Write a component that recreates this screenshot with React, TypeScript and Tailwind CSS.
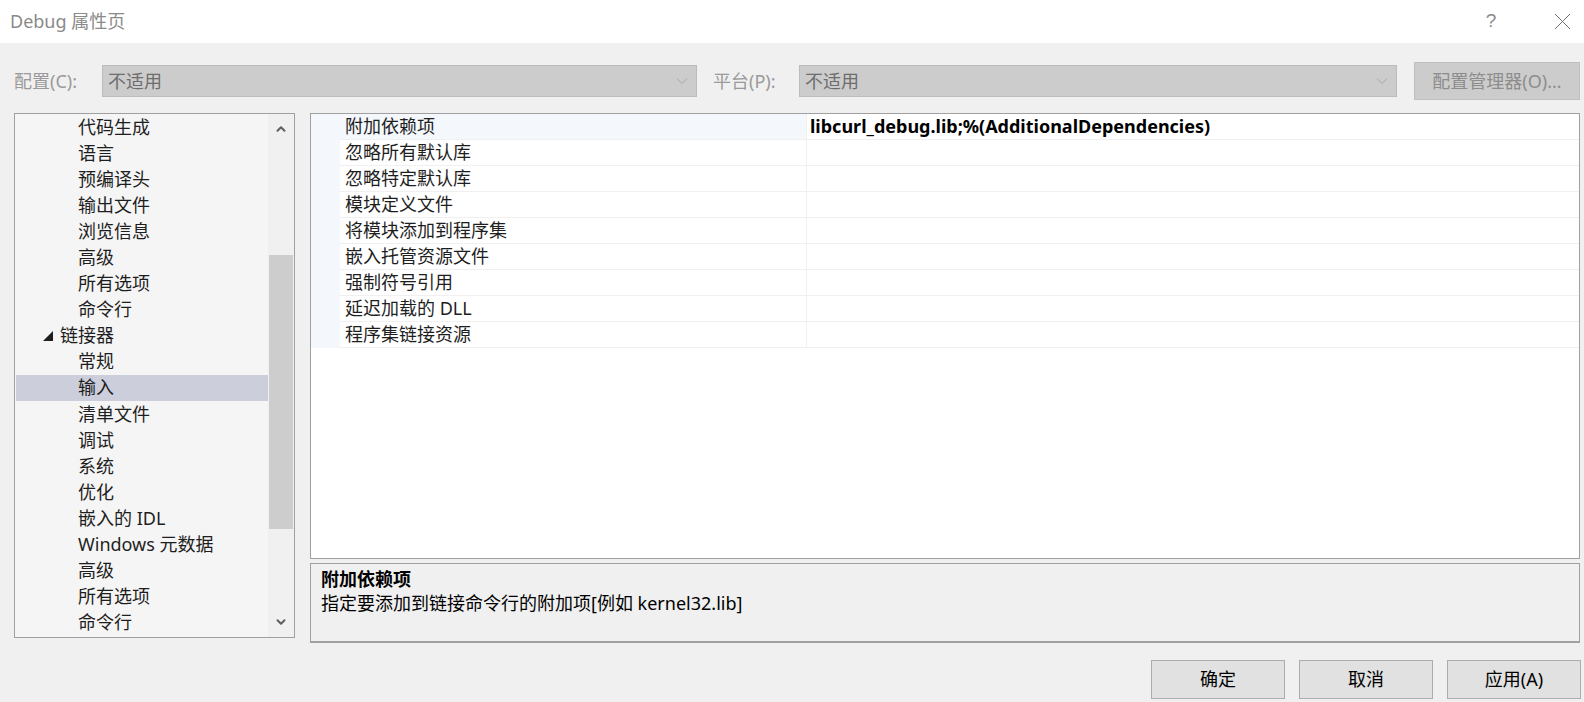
import { ChevronDown, ChevronUp } from "lucide-react";

const treeItems: { label: string; level: number; expanded?: boolean; selected?: boolean }[] = [
  { label: "代码生成", level: 2 },
  { label: "语言", level: 2 },
  { label: "预编译头", level: 2 },
  { label: "输出文件", level: 2 },
  { label: "浏览信息", level: 2 },
  { label: "高级", level: 2 },
  { label: "所有选项", level: 2 },
  { label: "命令行", level: 2 },
  { label: "链接器", level: 1, expanded: true },
  { label: "常规", level: 2 },
  { label: "输入", level: 2, selected: true },
  { label: "清单文件", level: 2 },
  { label: "调试", level: 2 },
  { label: "系统", level: 2 },
  { label: "优化", level: 2 },
  { label: "嵌入的 IDL", level: 2 },
  { label: "Windows 元数据", level: 2 },
  { label: "高级", level: 2 },
  { label: "所有选项", level: 2 },
  { label: "命令行", level: 2 },
];

const props = [
  { name: "附加依赖项", value: "libcurl_debug.lib;%(AdditionalDependencies)" },
  { name: "忽略所有默认库", value: "" },
  { name: "忽略特定默认库", value: "" },
  { name: "模块定义文件", value: "" },
  { name: "将模块添加到程序集", value: "" },
  { name: "嵌入托管资源文件", value: "" },
  { name: "强制符号引用", value: "" },
  { name: "延迟加载的 DLL", value: "" },
  { name: "程序集链接资源", value: "" },
];

const Dropdown = ({ width }: { width: string }) => (
  <div
    className={`${width} shrink-0 h-[32px] bg-[#cccccc] border border-[#bcbcbc] flex items-center justify-between pl-[5px] pr-[8px]`}
  >
    <span className="text-[18px] text-[#6d6d6d]">不适用</span>
    <svg width="12" height="8" viewBox="0 0 12 8">
      <polyline points="1,1.5 6,6.5 11,1.5" fill="none" stroke="#a8a8a8" strokeWidth="1" />
    </svg>
  </div>
);

export default function App() {
  return (
    <div className="w-full h-[702px] bg-[#f0f0f0] font-['Noto_Sans','Noto_Sans_CJK_SC',sans-serif] text-black overflow-hidden">
      {/* title bar */}
      <div className="h-[43px] bg-white flex items-center justify-between">
        <span className="pl-[10px] text-[18px] text-[#8a8a8a]">Debug 属性页</span>
        <div className="flex items-center">
          <span className="w-[40px] mr-[29px] text-center text-[19px] text-[#8a8a8a] font-['Liberation_Sans',sans-serif]">?</span>
          <div className="w-[44px] flex justify-center">
            <svg width="17" height="17" viewBox="0 0 17 17">
              <line x1="1" y1="1" x2="16" y2="16" stroke="#707070" strokeWidth="1" />
              <line x1="16" y1="1" x2="1" y2="16" stroke="#707070" strokeWidth="1" />
            </svg>
          </div>
        </div>
      </div>

      {/* config row */}
      <div className="mt-[19px] h-[38px] pl-[14px] flex items-center">
        <span className="w-[88px] shrink-0 text-[18px] text-[#9a9a9a]">配置(C):</span>
        <Dropdown width="w-[595px]" />
        <span className="ml-[16px] w-[86px] shrink-0 text-[18px] text-[#9a9a9a]">平台(P):</span>
        <Dropdown width="w-[598px]" />
        <button className="ml-[17px] w-[166px] shrink-0 h-[38px] bg-[#cccccc] border border-[#bfbfbf] text-[18px] text-[#8d8d8d]">
          配置管理器(O)...
        </button>
      </div>

      {/* main */}
      <div className="mt-[13px] h-[530px] pl-[14px] flex">
        {/* tree */}
        <div className="w-[281px] shrink-0 h-[525px] border border-[#a0a0a0] bg-[#f5f5f5] flex">
          <div className="flex-1 pl-[1px]">
            {treeItems.map((it, i) => (
              <div
                key={i}
                className={`h-[26.1px] flex items-center text-[18px] text-[#1e1e1e] ${it.selected ? "bg-[#cccedb]" : ""}`}
              >
                {it.level === 1 ? (
                  <div className="flex items-center pl-[27px]">
                    <svg width="10" height="10" viewBox="0 0 10 10" className="mr-[7px]">
                      <polygon points="10,0 10,10 0,10" fill="#1e1e1e" />
                    </svg>
                    <span>{it.label}</span>
                  </div>
                ) : (
                  <span className="pl-[62px]">{it.label}</span>
                )}
              </div>
            ))}
          </div>
          <div className="w-[26px] bg-[#f0f0f0] flex flex-col items-center">
            <div className="h-[30px] w-full flex items-center justify-center">
              <ChevronUp size={14} strokeWidth={3.5} color="#606060" />
            </div>
            <div className="mt-[111px] w-[24px] h-[274px] bg-[#cdcdcd]" />
            <div className="flex-1" />
            <div className="h-[30px] w-full flex items-center justify-center">
              <ChevronDown size={14} strokeWidth={3.5} color="#606060" />
            </div>
          </div>
        </div>

        {/* right */}
        <div className="ml-[15px] w-[1270px] shrink-0 flex flex-col">
          <div className="h-[446px] border border-[#a0a0a0] bg-white">
            {props.map((p, i) => (
              <div key={i} className="h-[26px] flex">
                <div className="w-[29px] bg-[#f4f7fc]" />
                <div
                  className={`w-[467px] border-b border-r border-[#f0f0f0] flex items-center pl-[5px] text-[18px] text-[#1e1e1e] ${
                    i === 0 ? "bg-[#f4f7fc]" : ""
                  }`}
                >
                  {p.name}
                </div>
                <div className="flex-1 border-b border-[#f0f0f0] flex items-center pl-[3px] text-[18px] font-bold">
                  {p.value}
                </div>
              </div>
            ))}
          </div>
          <div className="mt-[4px] h-[80px] border border-b-2 border-[#a0a0a0] bg-[#f0f0f0] pl-[10px] pt-[3px] text-[18px] leading-[24px]">
            <div className="font-bold">附加依赖项</div>
            <div>指定要添加到链接命令行的附加项[例如 kernel32.lib]</div>
          </div>
        </div>
      </div>

      {/* buttons */}
      <div className="mt-[17px] h-[39px] flex justify-end pr-[3px] gap-[14px]">
        {["确定", "取消", "应用(A)"].map((b) => (
          <button key={b} className="w-[134px] h-[39px] bg-[#e1e1e1] border border-[#adadad] text-[18px]">
            {b}
          </button>
        ))}
      </div>
    </div>
  );
}
